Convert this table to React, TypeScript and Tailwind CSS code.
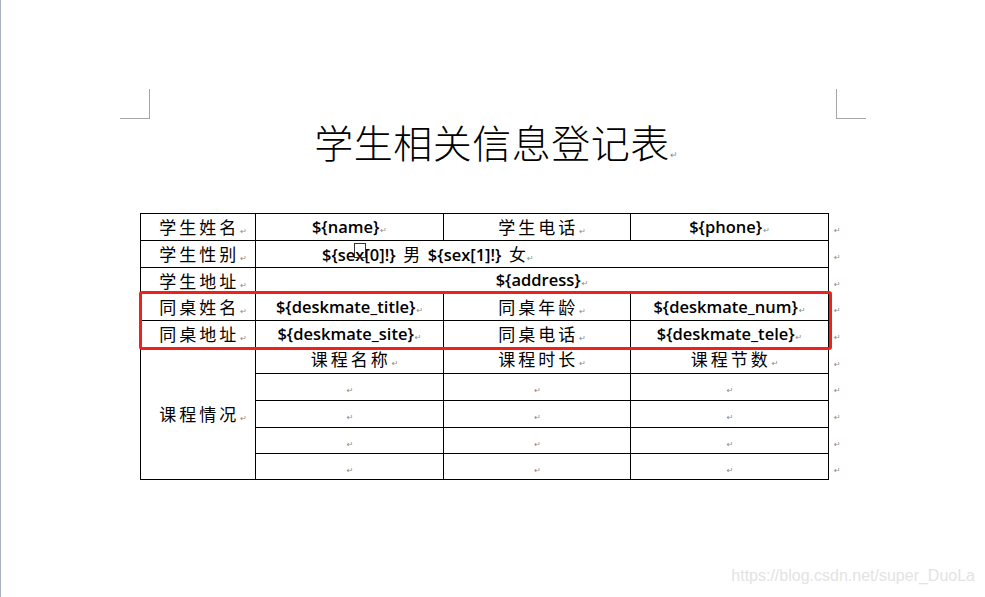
const cn = "font-['Noto_Sans_CJK_SC',sans-serif]"
const lat = "font-['Open_Sans','Noto_Sans_CJK_SC',sans-serif]"

function M() {
  return <span className="ml-[1px] font-['DejaVu_Sans',sans-serif] text-[8px] font-normal tracking-normal text-[#8a8a8a] align-baseline">↵</span>
}

const td = "border border-black p-0 text-center align-middle leading-none"
const cnCell = `${td} ${cn} pl-[10px] text-[17px] tracking-[3px] text-black`
const latCell = `${td} ${lat} text-[16.5px] font-semibold text-black`
const endCell = "border-none p-0 pl-[4px] text-left align-middle leading-none"

export default function App() {
  return (
    <div className="relative w-[985px] h-[597px] overflow-hidden bg-white border-l border-[#a7b0bf]">
      {/* corner marks */}
      <div className="flex justify-between ml-[119px] w-[746px] pt-[89px]">
        <div className="w-[30px] h-[30px] border-r-[1.5px] border-b-[1.5px] border-[#a6a6a6]" />
        <div className="w-[30px] h-[30px] border-l-[1.5px] border-b-[1.5px] border-[#a6a6a6]" />
      </div>

      {/* title */}
      <div className={`mt-[2px] ml-[6px] text-center ${cn} text-[39px] font-light leading-[40px] tracking-[0.5px] text-black`}>
        学生相关信息登记表<span className="font-['DejaVu_Sans',sans-serif] text-[9px] text-[#8a8a8a] tracking-normal">↵</span>
      </div>

      {/* table */}
      <div className="relative ml-[139px] mt-[38px] w-[705px]">
        <table className="table-fixed border-collapse">
          <colgroup>
            <col className="w-[115px]" />
            <col className="w-[188px]" />
            <col className="w-[187px]" />
            <col className="w-[198px]" />
            <col className="w-[16px]" />
          </colgroup>
          <tbody>
            <tr className="h-[27px]">
              <td className={cnCell}>学生姓名<M /></td>
              <td className={latCell}>{"${name}"}<M /></td>
              <td className={cnCell}>学生电话<M /></td>
              <td className={latCell}>{"${phone}"}<M /></td>
              <td className={endCell}><M /></td>
            </tr>
            <tr className="h-[27px]">
              <td className={cnCell}>学生性别<M /></td>
              <td colSpan={3} className={`${latCell} text-left pl-[66px]`}>
                {"${se"}
                <span className="relative">
                  x<span className="absolute left-[-1px] top-[0px] w-[12px] h-[15px] border border-[#333]" />
                </span>
                {"[0]!}"}
                <span className={`${cn} font-normal text-[17px]`}>&nbsp;&nbsp;男&nbsp;&nbsp;</span>
                {"${sex[1]!}"}
                <span className={`${cn} font-normal text-[17px]`}>&nbsp;&nbsp;女</span>
                <M />
              </td>
              <td className={endCell}><M /></td>
            </tr>
            <tr className="h-[26px]">
              <td className={cnCell}>学生地址<M /></td>
              <td colSpan={3} className={latCell}>{"${address}"}<M /></td>
              <td className={endCell}><M /></td>
            </tr>
            <tr className="h-[27px]">
              <td className={cnCell}>同桌姓名<M /></td>
              <td className={latCell}>{"${deskmate_title}"}<M /></td>
              <td className={cnCell}>同桌年龄<M /></td>
              <td className={latCell}>{"${deskmate_num}"}<M /></td>
              <td className={endCell}><M /></td>
            </tr>
            <tr className="h-[27px]">
              <td className={cnCell}>同桌地址<M /></td>
              <td className={latCell}>{"${deskmate_site}"}<M /></td>
              <td className={cnCell}>同桌电话<M /></td>
              <td className={latCell}>{"${deskmate_tele}"}<M /></td>
              <td className={endCell}><M /></td>
            </tr>
            <tr className="h-[26px]">
              <td rowSpan={5} className={cnCell}>课程情况<M /></td>
              <td className={`${cnCell} align-top pt-[2px]`}>课程名称<M /></td>
              <td className={`${cnCell} align-top pt-[2px]`}>课程时长<M /></td>
              <td className={`${cnCell} align-top pt-[2px]`}>课程节数<M /></td>
              <td className={endCell}><M /></td>
            </tr>
            {[27, 27, 26, 26].map((h, i) => (
              <tr key={i} className={h === 27 ? "h-[27px]" : "h-[26px]"}>
                <td className={td}><M /></td>
                <td className={td}><M /></td>
                <td className={td}><M /></td>
                <td className={endCell}><M /></td>
              </tr>
            ))}
          </tbody>
        </table>

        {/* red highlight */}
        <div className="pointer-events-none absolute left-[-1px] top-[78px] w-[693px] h-[59px] rounded-[3px] border-[3px] border-[#f0201a]" />
      </div>

      {/* watermark */}
      <div className="absolute right-[10px] bottom-[9px] font-['Liberation_Sans',sans-serif] text-[16px] text-[#e3e3e3]">
        https://blog.csdn.net/super_DuoLa
      </div>
    </div>
  )
}
